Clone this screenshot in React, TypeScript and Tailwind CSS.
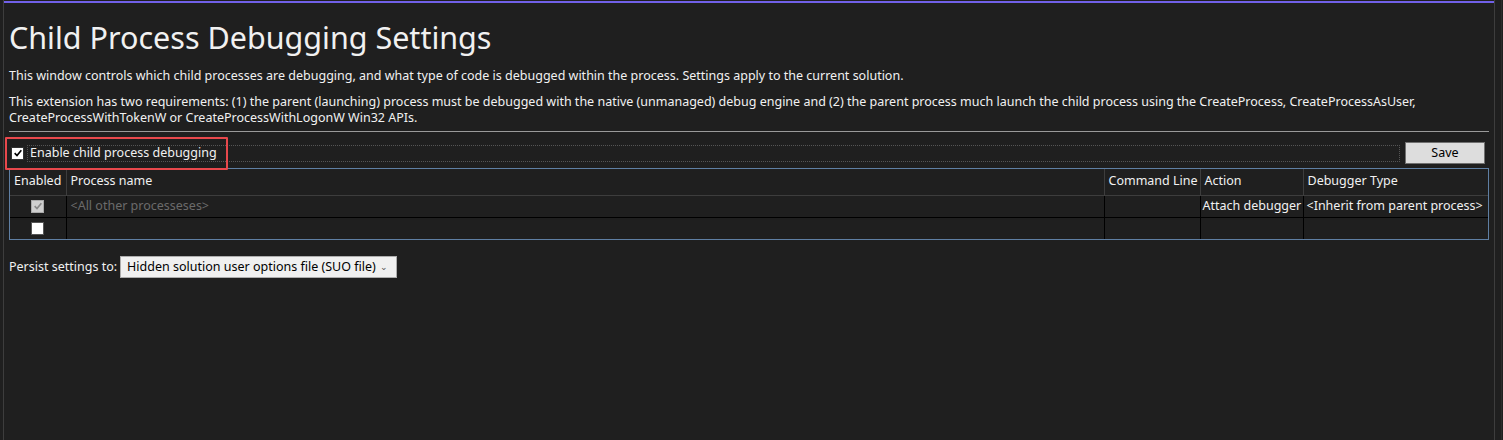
import { useState } from "react";

const cols = [
  { label: "Enabled", w: "w-[56px]" },
  { label: "Process name", w: "" },
  { label: "Command Line", w: "w-[96px]" },
  { label: "Action", w: "w-[103px]" },
  { label: "Debugger Type", w: "w-[185px]" },
];

const CheckMark = ({ color }: { color: string }) => (
  <svg viewBox="0 0 12 12" className="w-[10px] h-[10px]">
    <path d="M2 6.2 L4.8 9 L10 2.8" fill="none" stroke={color} strokeWidth="2" />
  </svg>
);

export default function App() {
  const [enabled, setEnabled] = useState(true);

  return (
    <div className="h-[440px] w-[1503px] bg-[#1f1f1f] overflow-hidden font-['Segoe_UI','Noto_Sans',sans-serif] text-[#f1f1f1] flex">
      <div className="w-[3px] shrink-0" />
      <div className="w-px shrink-0 bg-[#3d3d3d]" />
      <div className="flex-1 flex flex-col min-w-0">
        <div className="h-[1px]" />
        <div className="h-[2px] bg-[#7160e8]" />

        <div className="pl-[5px] pr-[5px]">
          <h1 className="text-[30.5px] leading-[40px] mt-[14px]">
            Child Process Debugging Settings
          </h1>
          <p className="text-[12.5px] leading-[16px] mt-[11px]">
            This window controls which child processes are debugging, and what type of code is debugged within the process.
            Settings apply to the current solution.
          </p>
          <p className="text-[12.5px] leading-[16px] mt-[10px]">
            This extension has two requirements: (1) the parent (launching) process must be debugged with the native
            (unmanaged) debug engine and (2) the parent process much launch the child process using the CreateProcess,
            CreateProcessAsUser,
            <br />
            CreateProcessWithTokenW or CreateProcessWithLogonW Win32 APIs.
          </p>
          <div className="h-px bg-[#9a9a9a] mt-[5px]" />

          <div className="flex items-center mt-[10px] h-[22px]">
            <div className="relative flex items-center flex-1 h-full">
              <div className="absolute left-[-4px] top-[-5px] w-[223px] h-[33px] border-2 border-[#e8484c] rounded-[1px]" />
              <button
                onClick={() => setEnabled(!enabled)}
                className="w-[13px] h-[13px] ml-[2px] bg-white border border-[#333] flex items-center justify-center"
              >
                {enabled && <CheckMark color="#000" />}
              </button>
              <div className="flex-1 ml-[3px] h-[17px] border border-dotted border-[#555] flex items-center pl-[2px]">
                <span className="text-[12.5px] leading-none">Enable child process debugging</span>
              </div>
            </div>
            <button className="ml-[5px] w-[80px] h-[22px] bg-[#dddddd] border border-[#707070] text-black text-[12.5px] mr-[4px]">
              Save
            </button>
          </div>

          <div className="mt-[4px] border border-[#5f7fa3]">
            <table className="w-full border-collapse text-[12.5px] table-fixed">
              <thead>
                <tr className="h-[26px]">
                  {cols.map((c, i) => (
                    <th
                      key={c.label}
                      className={`${c.w} font-normal text-left px-[4px] border-b border-[#3d3d3d] whitespace-nowrap ${
                        i < cols.length - 1 ? "border-r border-r-[#3d3d3d]" : ""
                      }`}
                    >
                      {c.label}
                    </th>
                  ))}
                </tr>
              </thead>
              <tbody>
                <tr className="h-[22px]">
                  <td className="border-r border-b border-black text-center">
                    <span className="inline-flex w-[13px] h-[13px] bg-[#cfcfcf] border border-[#aaa] items-center justify-center align-middle">
                      <CheckMark color="#888" />
                    </span>
                  </td>
                  <td className="border-r border-b border-black px-[4px] text-[#6b6b6b]">&lt;All other processeses&gt;</td>
                  <td className="border-r border-b border-black" />
                  <td className="border-r border-b border-black px-[2px] whitespace-nowrap">Attach debugger</td>
                  <td className="border-b border-black px-[3px] whitespace-nowrap">&lt;Inherit from parent process&gt;</td>
                </tr>
                <tr className="h-[22px]">
                  <td className="border-r border-black text-center">
                    <span className="inline-block w-[13px] h-[13px] bg-white border border-[#555] align-middle" />
                  </td>
                  <td className="border-r border-black" />
                  <td className="border-r border-black" />
                  <td className="border-r border-black" />
                  <td />
                </tr>
              </tbody>
            </table>
          </div>

          <div className="flex items-center mt-[16px] text-[12.5px]">
            <span>Persist settings to:</span>
            <div className="ml-[3px] w-[277px] h-[22px] bg-[#f0f0f0] border border-[#adadad] text-black flex items-center pl-[6px] pr-[8px]">
              <span className="flex-1 whitespace-nowrap">Hidden solution user options file (SUO file)</span>
              <span className="text-[9px] text-[#555]">&#8964;</span>
            </div>
          </div>
        </div>
      </div>
      <div className="w-px shrink-0 bg-[#3d3d3d]" />
      <div className="w-[6px] shrink-0" />
      <div className="w-px shrink-0 bg-[#2c2c2c]" />
      <div className="w-px shrink-0" />
    </div>
  );
}
